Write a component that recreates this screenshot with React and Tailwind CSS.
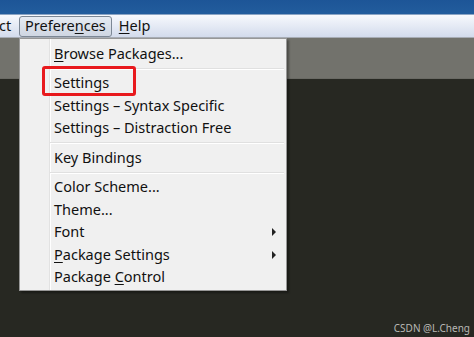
const ITEMS = [
  { type: 'item', label: 'Browse Packages...', u: 0 },
  { type: 'sep' },
  { type: 'item', label: 'Settings', boxed: true },
  { type: 'item', label: 'Settings – Syntax Specific' },
  { type: 'item', label: 'Settings – Distraction Free' },
  { type: 'sep' },
  { type: 'item', label: 'Key Bindings' },
  { type: 'sep' },
  { type: 'item', label: 'Color Scheme...' },
  { type: 'item', label: 'Theme...' },
  { type: 'item', label: 'Font', sub: true },
  { type: 'item', label: 'Package Settings', u: 0, sub: true },
  { type: 'item', label: 'Package Control', u: 8 },
];

const Label = ({ text, u }) => {
  if (u === undefined) return <span>{text}</span>;
  return (
    <span>
      {text.slice(0, u)}
      <span className="underline underline-offset-2">{text[u]}</span>
      {text.slice(u + 1)}
    </span>
  );
};

const App = () => {
  return (
    <div
      className="relative w-[474px] h-[337px] overflow-hidden flex flex-col bg-[#272822]"
      style={{ fontFamily: '"Noto Sans", "Open Sans", sans-serif' }}
    >
      <div className="h-[14px] bg-gradient-to-b from-[#1d5597] to-[#225d9d]" />
      <div className="h-[24px] flex items-center border-t border-[#8aa4c4] border-b border-b-[#a7acb4] bg-gradient-to-b from-[#f7f9fd] to-[#d3dbec] text-[14.5px] text-[#111]">
        <span className="-ml-[1px] w-[19px]">ct</span>
        <span className="ml-[1px] h-[21px] px-[5px] flex items-center border border-[#7c8795] rounded-[3px] bg-gradient-to-b from-[#e6ebf3] to-[#cfd6e2]">
          Prefere<span className="underline underline-offset-2">n</span>ces
        </span>
        <span className="ml-[7px]">
          <span className="underline underline-offset-2">H</span>elp
        </span>
      </div>
      <div className="h-[41px] bg-[#72726c] border-b border-[#6a6a64]" />
      <div className="flex-1 bg-[#272822] flex items-end justify-end pr-[4px] pb-[4px]">
        <span className="text-[10px] text-[#b9b9b5] leading-none">CSDN @L.Cheng</span>
      </div>

      <div className="absolute left-[19px] top-[38px] w-[268px] h-[253px] bg-[#f0f0f0] border border-[#979797] shadow-[2px_2px_2px_rgba(0,0,0,0.35)] text-[14.5px] text-[#111]">
        <div className="absolute left-[29px] top-0 bottom-0 w-[2px] bg-[#e2e2e2] border-r border-white" />
        <div className="relative flex flex-col pt-[3.5px]">
          {ITEMS.map((it, i) =>
            it.type === 'sep' ? (
              <div key={i} className="ml-[30px] mr-[2px] h-[7px] flex flex-col justify-center">
                <div className="h-[1px] bg-[#e0e0e0]" />
                <div className="h-[1px] bg-white" />
              </div>
            ) : (
              <div key={i} className="relative h-[22.5px] flex items-center pl-[34px] pr-[10px]">
                <Label text={it.label} u={it.u} />
                {it.sub && (
                  <span className="ml-auto w-0 h-0 border-y-[4px] border-y-transparent border-l-[4px] border-l-[#222]" />
                )}
                {it.boxed && (
                  <div className="absolute left-[22px] top-[-6.5px] w-[94px] h-[30px] border-[3px] border-[#e8191d] rounded-[3px]" />
                )}
              </div>
            )
          )}
        </div>
      </div>
    </div>
  );
};

export default App;
